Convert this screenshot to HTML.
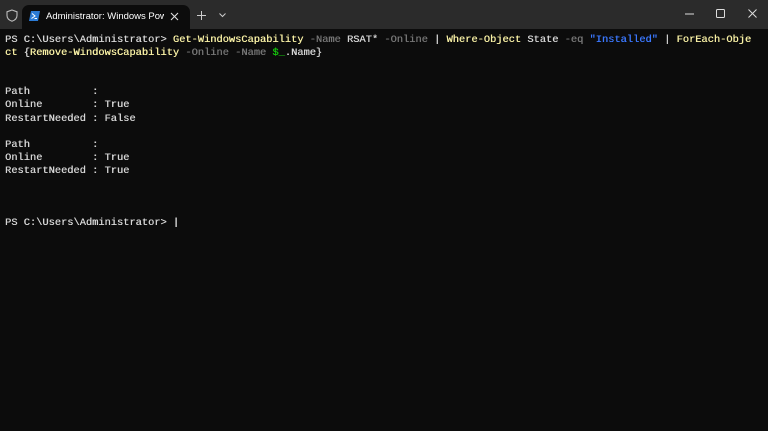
<!DOCTYPE html>
<html><head><style>
body{margin:0;width:768px;height:431px;background:#0c0c0c;overflow:hidden;font-family:"Liberation Sans",sans-serif}
.bar{position:absolute;left:0;top:0;width:768px;height:29px;background:#2b2b2b}
.tab{position:absolute;left:22px;top:5px;width:168px;height:24px;background:#0c0c0c;border-radius:7px 7px 0 0}
.tab .t{position:absolute;left:24px;top:6px;font-size:9.5px;color:#fff;white-space:nowrap;width:118px;overflow:hidden}
pre{position:absolute;left:5px;top:34px;margin:0;font-family:"Liberation Mono",monospace;font-size:10.37px;line-height:13.1px;color:#d6d6d6;text-shadow:0.3px 0 0 currentColor}
.y{color:#f9f1a5}.g{color:#767676}.b{color:#3b78ff}.gr{color:#16c60c}.w{color:#fff}
</style></head><body>
<div class="bar">
<svg style="position:absolute;left:6px;top:9px" width="12" height="13" viewBox="0 0 12 13"><path d="M6 1 L11 2.8 V6.5 C11 9.5 8.8 11.3 6 12.2 C3.2 11.3 1 9.5 1 6.5 V2.8 Z" fill="none" stroke="#bbb" stroke-width="1.1"/></svg>
<div class="tab">
<svg style="position:absolute;left:7px;top:6px" width="11" height="10" viewBox="0 0 11 10"><path d="M2 0 H11 L9 10 H0 Z" fill="#2b7bd6"/><path d="M3 2.5 L6 5 L2.5 7.5 M5.5 7.5 H8" stroke="#fff" stroke-width="1" fill="none"/></svg>
<div class="t">Administrator: Windows PowerShell</div>
<svg style="position:absolute;left:148px;top:7px" width="9" height="9" viewBox="0 0 9 9"><path d="M1 1 L8 8 M8 1 L1 8" stroke="#ddd" stroke-width="1.1"/></svg>
</div>
<svg style="position:absolute;left:197px;top:11px" width="9" height="9"><path d="M4.5 0 V9 M0 4.5 H9" stroke="#ccc" stroke-width="1"/></svg>
<svg style="position:absolute;left:219px;top:13px" width="7" height="5"><path d="M0.5 0.5 L3.5 3.5 L6.5 0.5" stroke="#ccc" fill="none" stroke-width="1"/></svg>
<svg style="position:absolute;left:685px;top:13px" width="9" height="2"><path d="M0 1 H9" stroke="#ddd"/></svg>
<svg style="position:absolute;left:716px;top:9px" width="9" height="9"><rect x="0.5" y="0.5" width="8" height="8" fill="none" stroke="#ddd" rx="1"/></svg>
<svg style="position:absolute;left:748px;top:9px" width="9" height="9"><path d="M0.5 0.5 L8.5 8.5 M8.5 0.5 L0.5 8.5" stroke="#ddd"/></svg>
</div>
<pre>PS C:\Users\Administrator&gt; <span class="y">Get-WindowsCapability</span> <span class="g">-Name</span> RSAT* <span class="g">-Online</span> | <span class="y">Where-Object</span> State <span class="g">-eq</span> <span class="b">"Installed"</span> | <span class="y">ForEach-Obje
ct</span> {<span class="y">Remove-WindowsCapability</span> <span class="g">-Online</span> <span class="g">-Name</span> <span class="gr">$_</span>.Name}


Path          :
Online        : True
RestartNeeded : False

Path          :
Online        : True
RestartNeeded : True



PS C:\Users\Administrator&gt; <span class="w">|</span></pre>
</body></html>
